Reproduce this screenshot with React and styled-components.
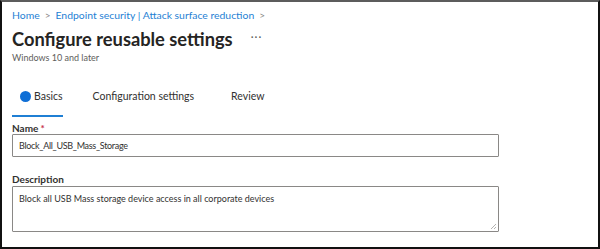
import React from 'react';
import styled, { createGlobalStyle } from 'styled-components';

const GlobalStyle = createGlobalStyle`
    html, body {
        margin: 0;
        padding: 0;
        background: #ffffff;
    }
    body {
        font-family: Lato, "Open Sans", sans-serif;
        color: #323130;
    }
`

const Frame = styled.div`
    box-sizing: border-box;
    width: 600px;
    height: 249px;
    border-top: 2px solid #5c5c5c;
    border-left: 2px solid #111111;
    border-right: 2px solid #111111;
    border-bottom: 2px solid #111111;
    padding: 6px 0 0 10px;
    overflow: hidden;
`

const Breadcrumb = styled.nav`
    display: flex;
    align-items: center;
    gap: 5px;
    font-size: 10.4px;
    color: #1f7fd4;
    height: 14px;
`

const Chevron = styled.span`
    color: #8a8886;
    font-size: 10px;
`

const TitleRow = styled.div`
    display: flex;
    align-items: center;
    margin-top: 5px;
    height: 24px;
`

const Title = styled.h1`
    margin: 0;
    font-size: 18.3px;
    font-weight: 700;
    color: #252423;
`

const More = styled.span`
    margin-left: 18px;
    color: #605e5c;
    font-size: 11px;
    letter-spacing: 1px;
    position: relative;
    top: -3px;
`

const Subtitle = styled.div`
    font-size: 9px;
    color: #605e5c;
    margin-top: 1px;
`

const Tabs = styled.div`
    display: flex;
    align-items: flex-start;
    margin-top: 27px;
    height: 32px;
`

const Tab = styled.div`
    display: flex;
    align-items: flex-start;
    gap: 3px;
    font-size: 10.5px;
    color: #323130;
    padding: 0 0 0 ${p => p.$pad || 0}px;
    height: 25px;
    border-bottom: ${p => (p.$active ? '2px solid #1f7fd4' : '2px solid transparent')};
    margin-right: ${p => p.$gap || 0}px;
`

const Dot = styled.span`
    width: 11px;
    height: 11px;
    margin-top: 1px;
    border-radius: 50%;
    background: #0f6fd6;
`

const Label = styled.div`
    font-size: 10px;
    font-weight: 700;
    color: #323130;
    height: 12px;
    line-height: 12px;
`

const Required = styled.span`
    color: #c4314b;
    margin-left: 2px;
`

const Field = styled.div`
    box-sizing: border-box;
    width: 487px;
    height: ${p => p.$h}px;
    margin-top: ${p => p.$mt}px;
    border: 1px solid #8a8886;
    border-radius: 1px;
    padding: ${p => p.$top}px 0 0 6px;
    font-size: 9px;
    letter-spacing: ${p => p.$ls || 0}px;
    color: #323130;
    position: relative;
`

const Grip = styled.svg`
    position: absolute;
    right: 1px;
    bottom: 1px;
`

const Section = styled.div`
    margin-top: ${p => p.$mt}px;
`

export default function App() {
    return (
        <>
            <GlobalStyle />
            <Frame>
                <Breadcrumb>
                    <span>Home</span>
                    <Chevron>&gt;</Chevron>
                    <span>Endpoint security | Attack surface reduction</span>
                    <Chevron>&gt;</Chevron>
                </Breadcrumb>
                <TitleRow>
                    <Title>Configure reusable settings</Title>
                    <More>···</More>
                </TitleRow>
                <Subtitle>Windows 10 and later</Subtitle>
                <Tabs>
                    <Tab $active $pad={8} $gap={30}>
                        <Dot />
                        <span>Basics</span>
                    </Tab>
                    <Tab $gap={37}>Configuration settings</Tab>
                    <Tab>Review</Tab>
                </Tabs>
                <Section $mt={0}>
                    <Label>
                        Name<Required>*</Required>
                    </Label>
                    <Field $h={23} $mt={0} $top={5} $ls={-0.3}>Block_All_USB_Mass_Storage</Field>
                </Section>
                <Section $mt={16}>
                    <Label>Description</Label>
                    <Field $h={46} $mt={1} $top={6}>
                        Block all USB Mass storage device access in all corporate devices
                        <Grip width="7" height="7" viewBox="0 0 7 7">
                            <path d="M6 1 L1 6 M6 4 L4 6" stroke="#a19f9d" strokeWidth="0.8" />
                        </Grip>
                    </Field>
                </Section>
            </Frame>
        </>
    );
}
